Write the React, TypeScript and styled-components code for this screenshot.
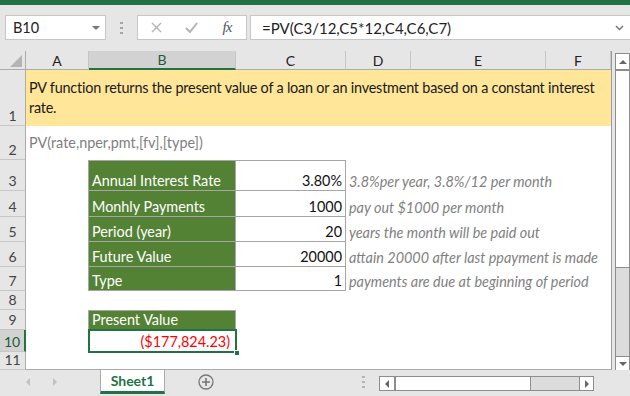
import styled, { createGlobalStyle, css } from 'styled-components'

const GlobalStyle = createGlobalStyle`
  html, body {
    margin: 0;
    padding: 0;
  }
  body {
    width: 630px;
    height: 396px;
    overflow: hidden;
    background: #fff;
    font-family: "Lato", "Liberation Sans", sans-serif;
  }
  * {
    box-sizing: border-box;
  }
`

const GREEN = '#217346'
const CHROME = '#e6e6e6'
const CELL_FONT = '14.4px'

const Window = styled.div`
  width: 630px;
  height: 396px;
  display: flex;
  flex-direction: column;
  background: ${CHROME};
`

const Ribbon = styled.div`
  height: 5px;
  background: ${GREEN};
`

const FormulaBar = styled.div`
  height: 46px;
  display: flex;
  align-items: flex-start;
  padding: 10px 0 0 5px;
  background: ${CHROME};
`

const NameBox = styled.div`
  width: 101px;
  height: 25px;
  background: #fff;
  border: 1px solid #c6c6c6;
  display: flex;
  align-items: center;
  justify-content: space-between;
  padding: 0 5px 0 7px;
  font-size: 14.5px;
  color: #222;
`

const Grip = styled.div`
  width: 31px;
  height: 25px;
  display: flex;
  align-items: center;
  justify-content: center;
`

const FxBox = styled.div`
  width: 110px;
  height: 25px;
  background: #fff;
  border: 1px solid #c6c6c6;
  display: flex;
  align-items: center;
`

const FxSlot = styled.div<{ $w: number }>`
  width: ${(p) => p.$w}px;
  display: flex;
  justify-content: center;
  align-items: center;
`

const FxLabel = styled.span`
  font-family: "Liberation Serif", serif;
  font-style: italic;
  font-size: 15px;
  color: #555;
  letter-spacing: -1px;
`

const FormulaInput = styled.div`
  flex: 1;
  height: 25px;
  margin-left: 3px;
  background: #fff;
  border: 1px solid #c6c6c6;
  border-right: none;
  display: flex;
  align-items: center;
  justify-content: space-between;
  padding: 0 6px 0 11px;
  font-size: 15px;
  color: #222;
`

const Body = styled.div`
  display: flex;
  height: 319px;
`

const Sheet = styled.div`
  display: grid;
  grid-template-columns: 26px 63px 147px 110px 65px 135px 65px;
  grid-template-rows: 19px 56px 34px 31px 26px 25px 25px 24px 19px 20px 22px 18px;
  width: 612px;
  background: #fff;
  border-right: 1px solid #9b9b9b;
  border-bottom: 1px solid #ababab;
`

const Corner = styled.div`
  background: ${CHROME};
  border-right: 1px solid #ababab;
  border-bottom: 1px solid #ababab;
  display: flex;
  align-items: flex-end;
  justify-content: flex-end;
  padding: 0 3px 2px 0;
`

const ColHead = styled.div<{ $active?: boolean }>`
  background: ${CHROME};
  border-right: 1px solid #c6c6c6;
  border-bottom: 1px solid #ababab;
  display: flex;
  align-items: center;
  justify-content: center;
  font-size: 14px;
  color: #222;
  ${(p) =>
    p.$active &&
    css`
      background: #d2d2d2;
      border-bottom: 2px solid ${GREEN};
      color: #1d5a3a;
    `}
`

const RowHead = styled.div<{ $active?: boolean }>`
  background: ${CHROME};
  border-right: 1px solid #ababab;
  border-bottom: 1px solid #c6c6c6;
  display: flex;
  align-items: flex-end;
  justify-content: center;
  font-size: 14px;
  line-height: 18px;
  color: #444;
  ${(p) =>
    p.$active &&
    css`
      background: #d2d2d2;
      border-right: 2px solid ${GREEN};
      color: #1d5a3a;
    `}
`

const Blank = styled.div<{ $span?: number }>`
  grid-column: span ${(p) => p.$span ?? 1};
`

const Banner = styled.div`
  grid-column: span 6;
  background: #ffe699;
  display: flex;
  align-items: flex-end;
  padding: 0 0 8px 3px;
  font-size: ${CELL_FONT};
  line-height: 20px;
  letter-spacing: -0.2px;
  color: #1a1a1a;
`

const Syntax = styled.div`
  grid-column: span 6;
  display: flex;
  align-items: flex-end;
  padding: 0 0 7px 3px;
  font-size: ${CELL_FONT};
  line-height: 20px;
  color: #7f7f7f;
`

const TableCell = styled.div<{ $top?: boolean }>`
  display: flex;
  align-items: flex-end;
  font-size: ${CELL_FONT};
  line-height: 18px;
  white-space: nowrap;
  border-right: 1px solid #a6a6a6;
  border-bottom: 1px solid #a6a6a6;
  ${(p) =>
    p.$top &&
    css`
      border-top: 1px solid #a6a6a6;
    `}
`

const Label = styled(TableCell)`
  background: #548235;
  color: #fff;
  border-left: 1px solid #a6a6a6;
  padding: 0 0 0 3px;
  margin-left: -1px;
`

const Value = styled(TableCell)`
  background: #fff;
  color: #111;
  justify-content: flex-end;
  padding-right: 3px;
`

const Note = styled.div`
  grid-column: span 3;
  display: flex;
  align-items: flex-end;
  padding-left: 3px;
  font-size: ${CELL_FONT};
  line-height: 18px;
  font-style: italic;
  color: #7f7f7f;
  white-space: nowrap;
`

const Result = styled.div`
  position: relative;
  display: flex;
  align-items: flex-end;
  justify-content: flex-end;
  padding: 0 6px 1px 0;
  font-size: ${CELL_FONT};
  line-height: 18px;
  color: #ff0000;
  outline: 2px solid ${GREEN};
  outline-offset: -1px;
`

const FillHandle = styled.span`
  position: absolute;
  right: -4px;
  bottom: -4px;
  width: 6px;
  height: 6px;
  background: ${GREEN};
  border: 1px solid #fff;
`

const VScroll = styled.div`
  width: 18px;
  padding: 2px 0 0 3px;
  display: flex;
  flex-direction: column;
`

const VTrack = styled.div`
  flex: 1;
  display: flex;
  flex-direction: column;
  border: 1px solid #8d8d8d;
  border-bottom: none;
  background: #dcdcdc;
`

const ArrowBtn = styled.div<{ $h?: number; $w?: number }>`
  height: ${(p) => (p.$h ? `${p.$h}px` : 'auto')};
  width: ${(p) => (p.$w ? `${p.$w}px` : 'auto')};
  background: #fff;
  display: flex;
  align-items: center;
  justify-content: center;
  flex-shrink: 0;
`

const VThumb = styled.div`
  height: 199px;
  background: #fff;
  border-top: 2px solid #8d8d8d;
  border-bottom: 1px solid #8d8d8d;
`

const VGap = styled.div`
  flex: 1;
`

const TabBar = styled.div`
  height: 26px;
  display: flex;
  align-items: flex-start;
  background: ${CHROME};
`

const TabNav = styled.div`
  width: 100px;
  height: 24px;
  display: flex;
  align-items: center;
  gap: 21px;
  padding-left: 25px;
`

const Tab = styled.div`
  width: 65px;
  height: 24px;
  background: #fff;
  border-left: 1px solid #ababab;
  border-right: 1px solid #ababab;
  border-bottom: 3px solid ${GREEN};
  display: flex;
  align-items: center;
  justify-content: center;
  font-size: 14px;
  font-weight: 700;
  color: ${GREEN};
`

const AddSheet = styled.div`
  width: 82px;
  height: 24px;
  display: flex;
  align-items: center;
  padding-left: 33px;
`

const TabSpacer = styled.div`
  width: 132px;
  height: 24px;
  display: flex;
  align-items: center;
  justify-content: flex-end;
  padding-right: 14px;
`

const HScroll = styled.div`
  margin-top: 6px;
  width: 215px;
  height: 15px;
  display: flex;
  border: 1px solid #8d8d8d;
  background: #dcdcdc;
`

const HThumb = styled.div`
  width: 137px;
  background: #fff;
  border-left: 2px solid #8d8d8d;
  border-right: 1px solid #8d8d8d;
`

function Dots({ color = '#a6a6a6' }: { color?: string }) {
  return (
    <svg width="3" height="12" viewBox="0 0 3 12">
      <rect x="0" y="0" width="3" height="2" fill={color} />
      <rect x="0" y="5" width="3" height="2" fill={color} />
      <rect x="0" y="10" width="3" height="2" fill={color} />
    </svg>
  )
}

function Tri({ dir, color = '#666' }: { dir: 'up' | 'down' | 'left' | 'right'; color?: string }) {
  const pts = {
    up: '0,5 4,1 8,5',
    down: '0,1 8,1 4,5',
    left: '5,0 5,8 1,4',
    right: '1,0 1,8 5,4',
  }[dir]
  const vert = dir === 'up' || dir === 'down'
  return (
    <svg width={vert ? 8 : 6} height={vert ? 6 : 8} viewBox={vert ? '0 0 8 6' : '0 0 6 8'}>
      <polygon points={pts} fill={color} />
    </svg>
  )
}

const rows = [
  { n: 3, label: 'Annual Interest Rate', value: '3.80%', note: '3.8%per year, 3.8%/12 per month' },
  { n: 4, label: 'Monhly Payments', value: '1000', note: 'pay out $1000 per month' },
  { n: 5, label: 'Period (year)', value: '20', note: 'years the month will be paid out' },
  { n: 6, label: 'Future Value', value: '20000', note: 'attain 20000 after last ppayment is made' },
  { n: 7, label: 'Type', value: '1', note: 'payments are due at beginning of period' },
]

export default function App() {
  return (
    <Window>
      <GlobalStyle />
      <Ribbon />
      <FormulaBar>
        <NameBox>
          <span>B10</span>
          <Tri dir="down" color="#777" />
        </NameBox>
        <Grip>
          <Dots />
        </Grip>
        <FxBox>
          <FxSlot $w={36}>
            <svg width="11" height="11" viewBox="0 0 11 11">
              <path d="M1 1 L10 10 M10 1 L1 10" stroke="#b4b4b4" strokeWidth="1.4" />
            </svg>
          </FxSlot>
          <FxSlot $w={34}>
            <svg width="13" height="11" viewBox="0 0 13 11">
              <path d="M1 6 L5 10 L12 1" stroke="#b4b4b4" strokeWidth="2" fill="none" />
            </svg>
          </FxSlot>
          <FxSlot $w={38}>
            <FxLabel>fx</FxLabel>
          </FxSlot>
        </FxBox>
        <FormulaInput>
          <span>=PV(C3/12,C5*12,C4,C6,C7)</span>
          <svg width="9" height="6" viewBox="0 0 9 6">
            <path d="M1 1 L4.5 4.5 L8 1" stroke="#777" strokeWidth="1.5" fill="none" />
          </svg>
        </FormulaInput>
      </FormulaBar>
      <Body>
        <Sheet>
          <Corner>
            <svg width="12" height="12" viewBox="0 0 12 12">
              <polygon points="12,0 12,12 0,12" fill="#b4b4b4" />
            </svg>
          </Corner>
          {['A', 'B', 'C', 'D', 'E', 'F'].map((c) => (
            <ColHead key={c} $active={c === 'B'}>
              {c}
            </ColHead>
          ))}

          <RowHead>1</RowHead>
          <Banner>
            PV function returns the present value of a loan or an investment based on a constant interest rate.
          </Banner>

          <RowHead>2</RowHead>
          <Syntax>PV(rate,nper,pmt,[fv],[type])</Syntax>

          {rows.map((r, i) => (
            <>
              <RowHead key={`h${r.n}`}>{r.n}</RowHead>
              <Blank key={`a${r.n}`} />
              <Label key={`b${r.n}`} $top={i === 0}>
                {r.label}
              </Label>
              <Value key={`c${r.n}`} $top={i === 0}>
                {r.value}
              </Value>
              <Note key={`d${r.n}`}>{r.note}</Note>
            </>
          ))}

          <RowHead>8</RowHead>
          <Blank $span={6} />

          <RowHead>9</RowHead>
          <Blank />
          <Label $top>Present Value</Label>
          <Blank $span={4} />

          <RowHead $active>10</RowHead>
          <Blank />
          <Result>
            ($177,824.23)
            <FillHandle />
          </Result>
          <Blank $span={4} />

          <RowHead>11</RowHead>
          <Blank $span={6} />
        </Sheet>
        <VScroll>
          <VTrack>
            <ArrowBtn $h={15}>
              <Tri dir="up" />
            </ArrowBtn>
            <VThumb />
            <VGap />
            <ArrowBtn $h={14} style={{ borderTop: '1px solid #8d8d8d' }}>
              <Tri dir="down" />
            </ArrowBtn>
          </VTrack>
        </VScroll>
      </Body>
      <TabBar>
        <TabNav>
          <Tri dir="left" color="#c2c2c2" />
          <Tri dir="right" color="#c2c2c2" />
        </TabNav>
        <Tab>Sheet1</Tab>
        <AddSheet>
          <svg width="16" height="16" viewBox="0 0 16 16">
            <circle cx="8" cy="8" r="7" stroke="#777" strokeWidth="1.3" fill="none" />
            <path d="M8 4 V12 M4 8 H12" stroke="#777" strokeWidth="1.6" />
          </svg>
        </AddSheet>
        <TabSpacer>
          <Dots color="#b4b4b4" />
        </TabSpacer>
        <HScroll>
          <ArrowBtn $w={14}>
            <Tri dir="left" />
          </ArrowBtn>
          <HThumb />
          <VGap />
          <ArrowBtn $w={14} style={{ borderLeft: '1px solid #8d8d8d' }}>
            <Tri dir="right" />
          </ArrowBtn>
        </HScroll>
      </TabBar>
    </Window>
  )
}
